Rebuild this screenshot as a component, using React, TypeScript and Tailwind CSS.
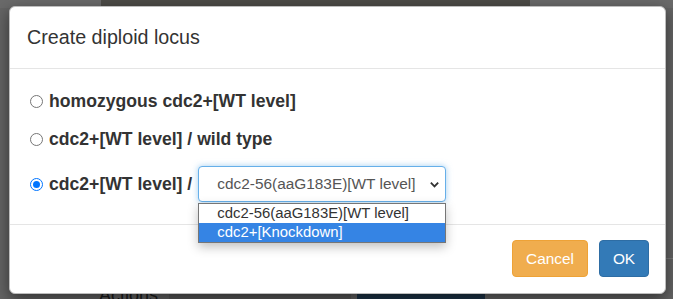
import { useState } from "react";

type Option = {
  id: string;
  label: string;
};

const options: Option[] = [
  { id: "wt", label: "cdc2-56(aaG183E)[WT level]" },
  { id: "kd", label: "cdc2+[Knockdown]" },
];

function Radio({ checked }: { checked: boolean }) {
  if (checked) {
    return (
      <span className="flex h-[13px] w-[13px] shrink-0 items-center justify-center rounded-full border border-[#0075ff] bg-white">
        <span className="h-[7px] w-[7px] rounded-full bg-[#0075ff]" />
      </span>
    );
  }
  return (
    <span className="h-[13px] w-[13px] shrink-0 rounded-full border border-[#767676] bg-white" />
  );
}

export default function App() {
  const [choice] = useState("other");
  const [hovered] = useState("kd");

  return (
    <div
      className="relative h-[299px] w-[673px] overflow-hidden bg-[#646464] text-[#333]"
      style={{ fontFamily: '"Liberation Sans", Arial, sans-serif' }}
    >
      {/* page behind the backdrop */}
      <div className="flex h-[8px]">
        <div className="w-[101px] bg-[#6a6a6a]" />
        <div className="flex-1 bg-[#4c4b47]" />
        <div className="w-[143px] bg-[#6a6a6a]" />
      </div>
      <div className="ml-auto mt-[250px] h-px w-[10px] bg-[#7a7a7a]" />
      <div className="mt-[27px] flex items-start gap-[6px] pl-[99px] text-[18px] leading-none">
        <span className="text-[#1c1c1c]">Actions:</span>
        <span className="mt-[1px] h-[20px] w-[182px] bg-[#595959]" />
        <span className="mt-[1px] h-[20px] w-[128px] bg-[#1d3448]" />
      </div>

      {/* modal */}
      <div className="absolute left-[9px] top-[6px] flex h-[288px] w-[657px] flex-col rounded-[6px] border border-[#bdbdbd] bg-white shadow-[0_5px_15px_rgba(0,0,0,0.5)]">
        <div className="flex h-[62px] items-center border-b border-[#e5e5e5] pl-[17px]">
          <h4 className="text-[19.7px] leading-none text-[#333]">Create diploid locus</h4>
        </div>

        <div className="relative flex h-[155px] flex-col px-[20px] pt-[20px]">
          <label className="flex h-[24px] items-center gap-[6px]">
            <Radio checked={choice === "homo"} />
            <span className="text-[17.6px] font-bold">homozygous cdc2+[WT level]</span>
          </label>
          <label className="mt-[14px] flex h-[24px] items-center gap-[6px]">
            <Radio checked={choice === "wild"} />
            <span className="text-[17.6px] font-bold">cdc2+[WT level] / wild type</span>
          </label>
          <div className="mt-[15px] flex h-[36px] items-center gap-[6px]">
            <Radio checked={choice === "other"} />
            <span className="text-[17.6px] font-bold">cdc2+[WT level] /</span>
            <div className="relative">
              <div className="flex h-[36px] w-[248px] items-center justify-between rounded-[4px] border border-[#66afe9] bg-white pl-[18px] pr-[5px] text-[15.4px] text-[#555] shadow-[0_0_6px_rgba(102,175,233,0.6)]">
                <span>{options[0].label}</span>
                <svg width="11" height="11" viewBox="0 0 12 12" fill="none" stroke="#333" strokeWidth="2">
                  <path d="M2 4l4 4 4-4" />
                </svg>
              </div>
              <ul className="absolute left-0 top-[37px] z-10 w-[248px] border border-[#767676] bg-white text-[14.9px] leading-[18px] shadow-[0_4px_10px_rgba(0,0,0,0.25)]">
                {options.map((o) => (
                  <li
                    key={o.id}
                    className={
                      o.id === hovered
                        ? "h-[19px] bg-[#3584e4] pl-[18px] text-white"
                        : "h-[19px] pl-[18px] text-[#333]"
                    }
                  >
                    {o.label}
                  </li>
                ))}
              </ul>
            </div>
          </div>
        </div>

        <div className="flex flex-1 items-start justify-end gap-[11px] border-t border-[#e5e5e5] pr-[16px] pt-[15px]">
          <button className="h-[37px] w-[76px] rounded-[4px] border border-[#eea236] bg-[#f0ad4e] text-[15.4px] text-white">
            Cancel
          </button>
          <button className="h-[37px] w-[50px] rounded-[4px] border border-[#2e6da4] bg-[#337ab7] text-[15.4px] text-white">
            OK
          </button>
        </div>
      </div>
    </div>
  );
}
